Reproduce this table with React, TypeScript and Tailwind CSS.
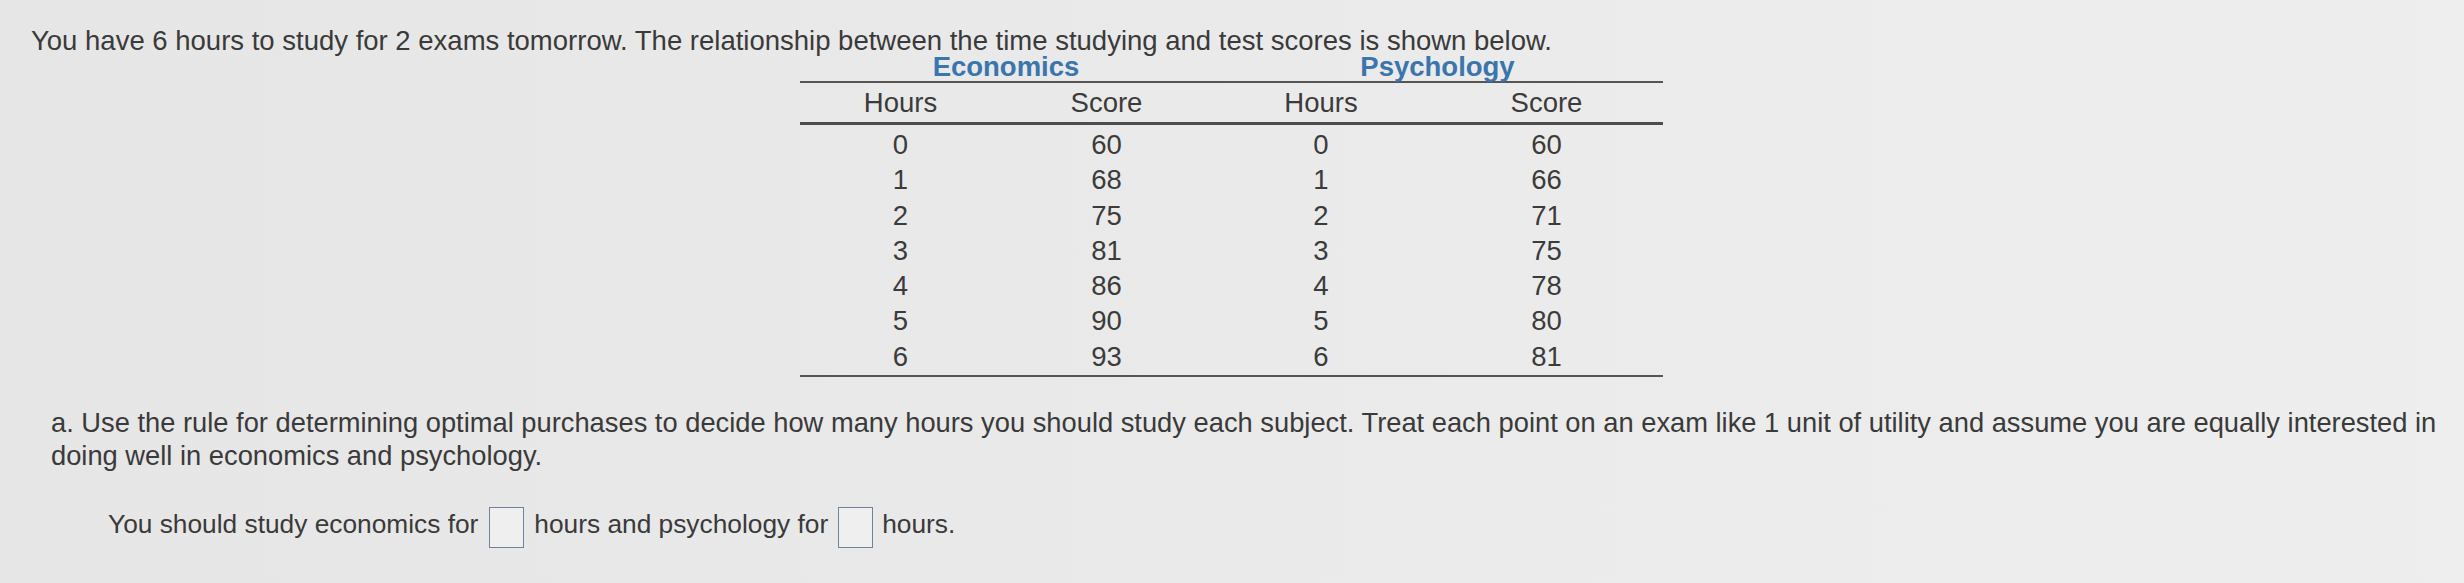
import * as React from "react";

/* ── Table data ── */
const ECON = [60, 68, 75, 81, 86, 90, 93];
const PSYCH = [60, 66, 71, 75, 78, 80, 81];

function AnswerBox() {
  return <span className="inline-block h-[41px] w-[35px] shrink-0 border-[1.5px] border-[#71819b] bg-[#efefef]" />;
}

function ScoreTable() {
  return (
    <div className="ml-[800px] w-[863px] text-[27.5px] text-[#3b3b3b]">
      <div className="grid h-[29px] grid-cols-[412px_451px] border-b-2 border-[#555] font-bold leading-[26px] text-[#3a76ad]">
        <span className="text-center">Economics</span>
        <span className="text-center">Psychology</span>
      </div>
      <div className="grid grid-cols-[201px_211px_218px_233px] border-b-[3px] border-[#4d4d4d] pt-[7px] pb-[6px] leading-[26px]">
        <span className="text-center">Hours</span>
        <span className="text-center">Score</span>
        <span className="text-center">Hours</span>
        <span className="text-center">Score</span>
      </div>
      <div className="border-b-2 border-[#555] pt-[2px] pb-[1px] leading-[35.3px]">
        {ECON.map((score, hours) => (
          <div key={hours} className="grid grid-cols-[201px_211px_218px_233px]">
            <span className="text-center">{hours}</span>
            <span className="text-center">{score}</span>
            <span className="text-center">{hours}</span>
            <span className="text-center">{PSYCH[hours]}</span>
          </div>
        ))}
      </div>
    </div>
  );
}

export default function App() {
  return (
    <div className="h-[583px] w-[2464px] overflow-hidden bg-linear-to-r from-[#e6e6e6] via-[#eaeaea] to-[#eeeeee] font-['Liberation_Sans',Arial,sans-serif] text-[#3a3a3a]">
      <p className="pt-[27px] pl-[31px] text-[27.5px] leading-[27px]">
        You have 6 hours to study for 2 exams tomorrow. The relationship between the time studying and test scores is shown below.
      </p>

      <ScoreTable />

      <p className="mt-[29px] pl-[51px] text-[27.3px] leading-[33px]">
        a. Use the rule for determining optimal purchases to decide how many hours you should study each subject. Treat each point on an exam like 1 unit of utility and assume you are equally interested in doing well in economics and psychology.
      </p>

      <div className="mt-[35px] flex items-start pl-[108px] text-[26.3px] leading-[35px]">
        <span>You should study economics for</span>
        <span className="ml-[11px] mr-[10px] flex"><AnswerBox /></span>
        <span>hours and psychology for</span>
        <span className="ml-[10px] mr-[9px] flex"><AnswerBox /></span>
        <span>hours.</span>
      </div>

      <p className="mt-[29px] pl-[55px] text-[27.3px] leading-[33px]">
        b. Suppose you only had 4 hours to study for the 2 exams tomorrow.
      </p>
    </div>
  );
}
